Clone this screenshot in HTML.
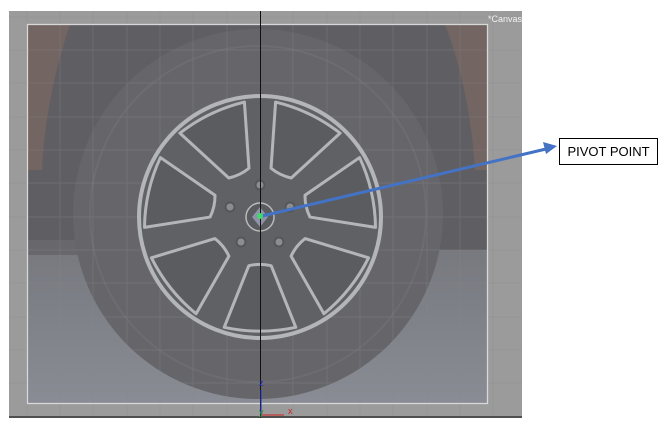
<!DOCTYPE html>
<html><head><style>
html,body{margin:0;padding:0;background:#fff;width:667px;height:428px;overflow:hidden;font-family:"Liberation Sans",sans-serif}
svg{position:absolute;left:0;top:0}
.lbl{position:absolute;left:559px;top:138px;width:97px;height:25px;border:1px solid #000;background:#fff;font-size:13px;line-height:25px;text-align:center;color:#000;font-family:"Liberation Sans",sans-serif}
</style></head><body>
<svg width="667" height="428" viewBox="0 0 667 428">
<defs>
<clipPath id="vp"><rect x="9" y="11" width="513" height="407"/></clipPath>
<clipPath id="fr"><rect x="27" y="24" width="461" height="380"/></clipPath>
<linearGradient id="snow" x1="0" y1="0" x2="0" y2="1">
<stop offset="0" stop-color="#77797f"/><stop offset="1" stop-color="#8a8d95"/></linearGradient>
<path id="win" d="M-11.2,48.7 Q0,46 11.2,48.7 L35.8,110.3 Q0,118 -35.8,110.3 Z" fill="#5b5c60" stroke="#b3b5b9" stroke-width="3" stroke-linejoin="round"/>
</defs>
<rect x="9" y="11" width="513" height="407" fill="#9b9b9b"/>
<g clip-path="url(#fr)">
<rect x="27" y="24" width="461" height="380" fill="#5f5f63"/>
<path d="M27,24 L70,24 Q45,100 42,170 L27,170 Z" fill="#726562"/>
<path d="M445,24 L488,24 L488,170 L475,170 Q470,90 445,24 Z" fill="#726562"/>
<rect x="27" y="250" width="461" height="160" fill="url(#snow)"/>
<rect x="27" y="240" width="60" height="15" fill="#68686c"/>
<circle cx="258" cy="214" r="185" fill="#66666a"/>
<circle cx="258" cy="214" r="168" fill="none" stroke="#6c6c71" stroke-width="2"/>
</g>
<g clip-path="url(#vp)" stroke="#88888a" stroke-width="0.7" opacity="0.45">
<path d="M27 11V418M60 11V418M93 11V418M127 11V418M160 11V418M193 11V418M227 11V418M293 11V418M327 11V418M360 11V418M393 11V418M427 11V418M460 11V418M493 11V418"/>
<path d="M9 17H522M9 50H522M9 83H522M9 117H522M9 150H522M9 183H522M9 217H522M9 250H522M9 283H522M9 317H522M9 350H522M9 383H522"/>
</g>
<g transform="translate(260,217)">
<circle r="121" fill="#606165" stroke="#b3b5b9" stroke-width="4"/>
<use href="#win"/>
<use href="#win" transform="rotate(51.43)"/>
<use href="#win" transform="rotate(102.86)"/>
<use href="#win" transform="rotate(154.29)"/>
<use href="#win" transform="rotate(205.71)"/>
<use href="#win" transform="rotate(257.14)"/>
<use href="#win" transform="rotate(308.57)"/>
<g fill="#8c8d91" stroke="#55565a" stroke-width="2">
<circle cx="0" cy="-32" r="4.5"/><circle cx="-30" cy="-10" r="4.5"/><circle cx="30" cy="-10" r="4.5"/><circle cx="-19" cy="25" r="4.5"/><circle cx="19" cy="25" r="4.5"/>
</g>
<circle r="14" fill="#5a5b5f" stroke="#b8babd" stroke-width="1.5"/>
<path d="M0,-10 L8,0 L0,10 L-8,0 Z" fill="#8e94a6"/>
</g>
<rect x="27.5" y="24.5" width="460" height="379" fill="none" stroke="#d8d8d8" stroke-width="1.3"/>
<line x1="260.5" y1="11" x2="260.5" y2="418" stroke="#111" stroke-width="1"/>
<line x1="9" y1="417" x2="522" y2="417" stroke="#222" stroke-width="1.3"/>
<line x1="261" y1="390" x2="261" y2="416" stroke="#2233cc" stroke-width="1"/>
<line x1="261" y1="415" x2="284" y2="415" stroke="#cc2222" stroke-width="1"/>
<text x="259" y="386" font-size="9" fill="#1a2ac0" font-family="Liberation Sans">z</text>
<text x="259" y="415" font-size="9" fill="#2a9a2a" font-family="Liberation Sans">y</text>
<text x="288" y="414" font-size="9" fill="#cc2222" font-family="Liberation Sans">x</text>
<text x="488" y="22" font-size="9" fill="#f2f2f2" font-family="Liberation Sans">*Canvas</text>
<rect x="522" y="0" width="145" height="428" fill="#fff"/>
<line x1="262" y1="216" x2="546" y2="149" stroke="#4472c4" stroke-width="3"/>
<path d="M557,146 L543,142 L546,154 Z" fill="#4472c4"/>
<circle cx="260" cy="216" r="3" fill="#3ddc6a"/>
</svg>
<div class="lbl">PIVOT POINT</div>
</body></html>
